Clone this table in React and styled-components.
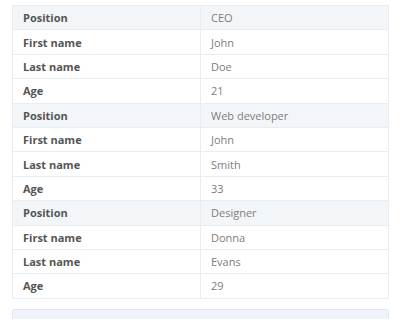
import React from "react";
import styled, { createGlobalStyle } from "styled-components";

const people = [
  { position: "CEO", first: "John", last: "Doe", age: 21 },
  { position: "Web developer", first: "John", last: "Smith", age: 33 },
  { position: "Designer", first: "Donna", last: "Evans", age: 29 },
];

export default function App() {
  return (
    <>
      <GlobalStyle />
      <Page>
        <Table>
          <tbody>
            {people.map((p, i) => (
              <React.Fragment key={i}>
                <Row head>
                  <Label>Position</Label>
                  <Value>{p.position}</Value>
                </Row>
                <Row>
                  <Label>First name</Label>
                  <Value>{p.first}</Value>
                </Row>
                <Row>
                  <Label>Last name</Label>
                  <Value>{p.last}</Value>
                </Row>
                <Row>
                  <Label>Age</Label>
                  <Value>{p.age}</Value>
                </Row>
              </React.Fragment>
            ))}
          </tbody>
        </Table>
        <Note />
      </Page>
    </>
  );
}

const GlobalStyle = createGlobalStyle`
  body {
    margin: 0;
    background: #fff;
    font-family: "Open Sans", "Liberation Sans", sans-serif;
  }
`;

const Page = styled.div`
  display: flex;
  flex-direction: column;
  gap: 10px;
  padding: 5px 11px 0 12px;
`;

const Table = styled.table`
  width: 100%;
  border-collapse: collapse;
  border: 1px solid #e9edf1;
  font-size: 11px;
`;

const Row = styled.tr`
  height: 24.4px;
  background: ${(p) => (p.head ? "#f3f6f9" : "#fff")};
  & + & {
    border-top: 1px solid #e9edf1;
  }
`;

const Label = styled.td`
  width: 50%;
  padding: 0 10px;
  font-weight: 700;
  color: #555;
  border-right: 1px solid #e9edf1;
`;

const Value = styled.td`
  padding: 0 10px;
  color: #7d7d7d;
`;

const Note = styled.div`
  height: 9px;
  background: #eef4fa;
  border: 1px solid #dfe8f1;
  border-bottom: none;
  border-radius: 3px 3px 0 0;
`;
